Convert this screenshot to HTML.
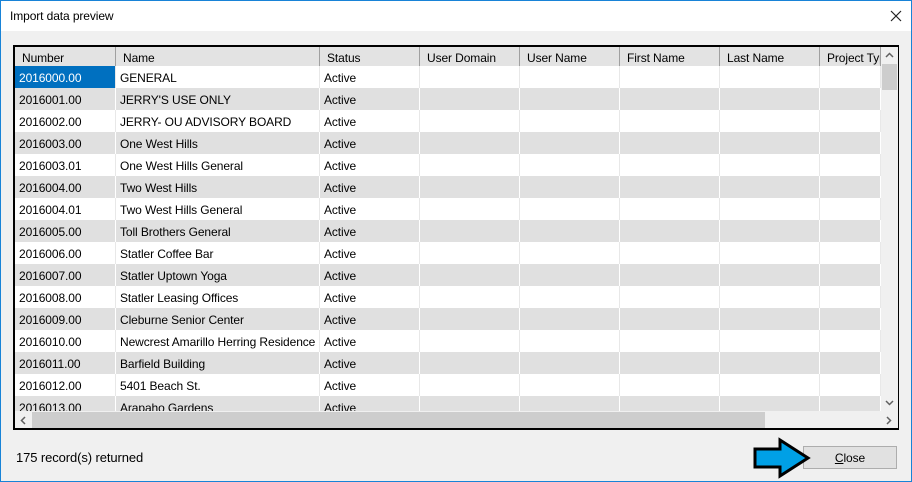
<!DOCTYPE html>
<html><head><style>
*{margin:0;padding:0;box-sizing:border-box}
body{width:912px;height:482px;overflow:hidden;font-family:"Liberation Sans",sans-serif;font-size:12px;color:#000;background:#f0f0f0;position:relative;letter-spacing:-0.1px}
.win{position:absolute;left:0;top:0;width:912px;height:482px;border:1px solid #1883d7;background:#f0f0f0}
.title{position:absolute;left:0;top:0;width:910px;height:30px;background:#fff}
.title span{position:absolute;left:9px;top:8px;font-size:12px}
.frame{position:absolute;left:13px;top:45px;width:886px;height:385px;border:2px solid #000;border-right:1px solid #000;border-bottom:2px solid #000;background:#fff;overflow:hidden}
.hdr{position:absolute;top:0;height:19px;background:#e3e3e3;border-right:1px solid #a0a0a0;padding:4px 0 0 7px;white-space:nowrap;overflow:hidden}
.cell{position:absolute;height:22px;padding:5px 0 0 4px;border-right:1px solid #e8e8e8;white-space:nowrap;overflow:hidden}
.g .cell{background:#e0e0e0;border-right:1px solid #fff}
.sel{background:#0070c0!important;color:#fff}
.vs{position:absolute;left:866px;top:0;width:17px;height:364px;background:#f0f0f0}
.vt{position:absolute;left:1px;top:17px;width:15px;height:26px;background:#cdcdcd}
.hs{position:absolute;left:0;top:364px;width:883px;height:18px;background:#f0f0f0}
.ht{position:absolute;left:17px;top:1px;width:733px;height:16px;background:#cdcdcd}
.foot{position:absolute;left:16px;top:450px;font-size:13px}
.btn{position:absolute;left:803px;top:446px;width:94px;height:23px;background:#e1e1e1;border:1px solid #adadad;text-align:center;padding-top:4px;font-size:12px}
svg.ic{position:absolute}
</style></head><body>
<div class="win">
<div class="title"><span>Import data preview</span>
<svg class="ic" style="left:889px;top:9px" width="12" height="12" viewBox="0 0 12 12"><path d="M1 1L11 11M11 1L1 11" stroke="#222" stroke-width="1.2"/></svg>
</div>
</div>
<div class="frame" id="f"></div>
<div class="foot">175 record(s) returned</div>
<div class="btn"><u>C</u>lose</div>
<svg style="position:absolute;left:752px;top:437px" width="60" height="42" viewBox="0 0 60 42">
<path d="M3 12 H28 V3 L56 21 L28 39 V30 H3 Z" fill="#00a0e6" stroke="#000" stroke-width="3" stroke-linejoin="miter"/>
</svg>
<script>
var cols=[["Number",0,101],["Name",101,204],["Status",305,100],["User Domain",405,100],["User Name",505,100],["First Name",605,100],["Last Name",705,100],["Project Type",805,61]];
var rows=[["2016000.00","GENERAL"],["2016001.00","JERRY'S USE ONLY"],["2016002.00","JERRY- OU ADVISORY BOARD"],["2016003.00","One West Hills"],["2016003.01","One West Hills General"],["2016004.00","Two West Hills"],["2016004.01","Two West Hills General"],["2016005.00","Toll Brothers General"],["2016006.00","Statler Coffee Bar"],["2016007.00","Statler Uptown Yoga"],["2016008.00","Statler Leasing Offices"],["2016009.00","Cleburne Senior Center"],["2016010.00","Newcrest Amarillo Herring Residence"],["2016011.00","Barfield Building"],["2016012.00","5401 Beach St."],["2016013.00","Arapaho Gardens"]];
var h='';
cols.forEach(function(c){h+='<div class="hdr" style="left:'+c[1]+'px;width:'+c[2]+'px">'+c[0]+'</div>';});
rows.forEach(function(r,i){
 var top=19+i*22;
 h+='<div class="'+(i%2?'g':'')+'">';
 cols.forEach(function(c,j){
  var t=j==0?r[0]:j==1?r[1]:j==2?'Active':'';
  h+='<div class="cell'+(i==0&&j==0?' sel':'')+'" style="left:'+c[1]+'px;top:'+top+'px;width:'+c[2]+'px">'+t+'</div>';
 });
 h+='</div>';
});
var ch='stroke="#606060" stroke-width="1.5" fill="none"';
h+='<div class="vs"><svg class="ic" style="left:4px;top:5px" width="9" height="6"><path d="M1 5L4.5 1.5L8 5" '+ch+'/></svg><div class="vt"></div><svg class="ic" style="left:4px;top:353px" width="9" height="6"><path d="M1 1L4.5 4.5L8 1" '+ch+'/></svg></div>';
h+='<div class="hs"><svg class="ic" style="left:5px;top:5px" width="6" height="9"><path d="M5 1L1.5 4.5L5 8" '+ch+'/></svg><div class="ht"></div><svg class="ic" style="left:871px;top:5px" width="6" height="9"><path d="M1 1L4.5 4.5L1 8" '+ch+'/></svg></div>';
document.getElementById('f').innerHTML=h;
</script>
</body></html>
